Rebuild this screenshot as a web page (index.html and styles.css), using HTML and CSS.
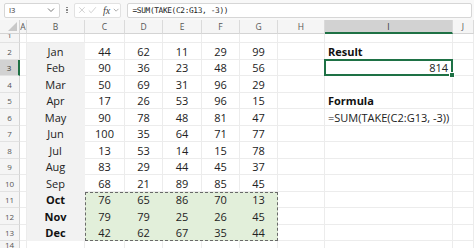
FILE: index.html
```html
<!DOCTYPE html>
<html lang="en">
<head>
    <meta charset="UTF-8">
    <meta name="viewport" content="width=device-width, initial-scale=1.0">
    <title>TAKE last rows</title>
    <link rel="stylesheet" href="styles.css">
</head>
<body>
    <div class="formula-bar">
        <div class="name-box">
            <span>I3</span>
            <svg class="chev" width="8" height="6" viewBox="0 0 8 6"><path d="M1 1.5 L4 4.5 L7 1.5" fill="none" stroke="#777" stroke-width="1"/></svg>
        </div>
        <div class="grip"><i></i><i></i><i></i></div>
        <div class="bar-icons">
            <svg width="10" height="10" viewBox="0 0 10 10"><path d="M1.5 1.5 L8.5 8.5 M8.5 1.5 L1.5 8.5" stroke="#c4c4c4" stroke-width="1"/></svg>
            <svg width="11" height="10" viewBox="0 0 11 10"><path d="M1 5.5 L4 8.5 L10 1.5" fill="none" stroke="#c4c4c4" stroke-width="1"/></svg>
            <span class="fx">fx</span>
            <svg class="chev" width="8" height="6" viewBox="0 0 8 6"><path d="M1 1.5 L4 4.5 L7 1.5" fill="none" stroke="#999" stroke-width="1"/></svg>
        </div>
        <div class="formula-input">=SUM(TAKE(C2:G13, -3))</div>
    </div>

    <div class="sheet-wrap">
        <div class="sheet" id="sheet"></div>
        <div class="sheet overlay">
            <div class="copy-range"></div>
            <div class="selection"><span></span></div>
        </div>
    </div>

    <script>
        const data = [
            ["Jan", 44, 62, 11, 29, 99],
            ["Feb", 90, 36, 23, 48, 56],
            ["Mar", 50, 69, 31, 96, 29],
            ["Apr", 17, 26, 53, 96, 15],
            ["May", 90, 78, 48, 81, 47],
            ["Jun", 100, 35, 64, 71, 77],
            ["Jul", 13, 53, 14, 15, 78],
            ["Aug", 83, 29, 44, 45, 37],
            ["Sep", 68, 21, 89, 85, 45],
            ["Oct", 76, 65, 86, 70, 13],
            ["Nov", 79, 79, 25, 26, 45],
            ["Dec", 42, 62, 67, 35, 44]
        ];
        const colNames = ["A", "B", "C", "D", "E", "F", "G", "H", "I", "J"];
        const sheet = document.getElementById("sheet");

        const cell = (cls, text) => {
            const div = document.createElement("div");
            div.className = cls;
            if (text !== undefined) div.textContent = text;
            sheet.appendChild(div);
        };

        // header row
        cell("corner");
        colNames.forEach(name => {
            cell(name === "I" ? "col-head active" : "col-head", name);
        });

        // rows 1 to 14
        for (let r = 1; r <= 14; r++) {
            cell(r === 3 ? "row-head active" : "row-head", r);
            const row = data[r - 2];
            colNames.forEach((name, i) => {
                let cls = "cell";
                let text = "";
                if (row && name === "B") {
                    cls += " month";
                    if (r >= 11) cls += " bold";
                    text = row[0];
                } else if (row && i >= 2 && i <= 6) {
                    cls += " num";
                    if (r >= 11) cls += " taken";
                    text = row[i - 1];
                } else if (name === "I") {
                    if (r === 2) { cls += " label"; text = "Result"; }
                    if (r === 3) { cls += " result"; text = "814"; }
                    if (r === 5) { cls += " label"; text = "Formula"; }
                    if (r === 6) { cls += " formula"; text = "=SUM(TAKE(C2:G13, -3))"; }
                }
                cell(cls, text);
            });
        }
    </script>
</body>
</html>
```

FILE: styles.css
```css
body {
    margin: 0;
    padding: 0;
    background-color: #ffffff;
    font-family: "Open Sans", "Noto Sans", sans-serif;
    overflow: hidden;
}

.formula-bar {
    display: flex;
    align-items: center;
    height: 20px;
    padding: 0 2px 0 4px;
    background-color: #f8f8f8;
    box-sizing: border-box;
}

.name-box {
    display: flex;
    align-items: center;
    justify-content: space-between;
    width: 56px;
    height: 15px;
    padding: 0 4px;
    box-sizing: border-box;
    background-color: white;
    border: 1px solid #d6d6d6;
    border-radius: 2px;
    font-size: 7.5px;
    color: #333;
}

.grip {
    display: flex;
    flex-direction: column;
    gap: 1px;
    margin: 0 6px 0 6px;
}

.grip i {
    width: 1.5px;
    height: 1.5px;
    background-color: #888;
}

.bar-icons {
    display: flex;
    align-items: center;
    gap: 3px;
    height: 15px;
    width: 47px;
    padding-left: 3px;
    box-sizing: border-box;
    background-color: white;
    border: 1px solid #e2e2e2;
    border-radius: 2px;
}

.fx {
    font-family: "Liberation Serif", serif;
    font-style: italic;
    font-size: 10px;
    color: #444;
    margin-left: 3px;
}

.formula-input {
    flex: 1;
    height: 15px;
    margin-left: 6px;
    padding-left: 5px;
    box-sizing: border-box;
    background-color: white;
    border: 1px solid #d6d6d6;
    border-radius: 2px;
    font-family: "DejaVu Sans Mono", monospace;
    font-size: 7.8px;
    letter-spacing: -0.35px;
    line-height: 13px;
    color: #222;
}

.sheet-wrap {
    display: grid;
}

.sheet {
    grid-area: 1 / 1;
    display: grid;
    grid-template-columns: 20px 7px 58px 40px 38px 39px 38px 38px 47px 128px 21px;
    grid-template-rows: 14px 9px repeat(12, 16.5px) 12px;
}

.overlay {
    pointer-events: none;
}

.corner,
.col-head,
.row-head {
    background-color: #f5f5f5;
    color: #555;
    box-sizing: border-box;
}

.corner {
    position: relative;
    border-right: 1px solid #d4d4d4;
    border-bottom: 1px solid #d4d4d4;
}

.corner::after {
    content: "";
    position: absolute;
    right: 2px;
    bottom: 2px;
    border-left: 9px solid transparent;
    border-bottom: 9px solid #c8c8c8;
}

.col-head {
    display: flex;
    align-items: center;
    justify-content: center;
    font-size: 8.5px;
    border-right: 1px solid #dadada;
    border-bottom: 1px solid #d4d4d4;
}

.row-head {
    display: flex;
    align-items: flex-end;
    justify-content: center;
    padding-bottom: 2px;
    font-size: 8px;
    line-height: 10px;
    overflow: hidden;
    border-right: 1px solid #d4d4d4;
    border-bottom: 1px solid #e2e2e2;
}

.col-head.active {
    background-color: #d2d2d2;
    color: #333;
    border-bottom: 2px solid #1e7145;
}

.row-head.active {
    background-color: #d2d2d2;
    color: #333;
    border-right: 2px solid #1e7145;
}

.cell {
    display: flex;
    align-items: center;
    box-sizing: border-box;
    font-size: 11px;
    color: #222;
    white-space: nowrap;
    border-right: 1px solid #ececec;
    border-bottom: 1px solid #ececec;
    padding-top: 1px;
}

.month {
    justify-content: center;
    background-color: #f2f2f2;
    border-color: #f2f2f2;
}

.bold {
    font-weight: 700;
    color: #111;
}

.num {
    justify-content: center;
}

.taken {
    background-color: #e2efda;
    border-color: #e2efda;
}

.label {
    font-weight: 700;
    padding-left: 3px;
    color: #111;
}

.formula {
    padding-left: 3px;
    overflow: visible;
}

.result {
    justify-content: flex-end;
    padding-right: 4px;
}

.copy-range {
    grid-column: 4 / 9;
    grid-row: 12 / 15;
    border: 1px dashed #6a6a6a;
}

.selection {
    grid-column: 10 / 11;
    grid-row: 4 / 5;
    margin: -1px 0 0 -1px;
    border: 2px solid #1e7145;
    position: relative;
}

.selection span {
    position: absolute;
    right: -4px;
    bottom: -4px;
    width: 4px;
    height: 4px;
    background-color: #1e7145;
    border: 1px solid white;
}
```
